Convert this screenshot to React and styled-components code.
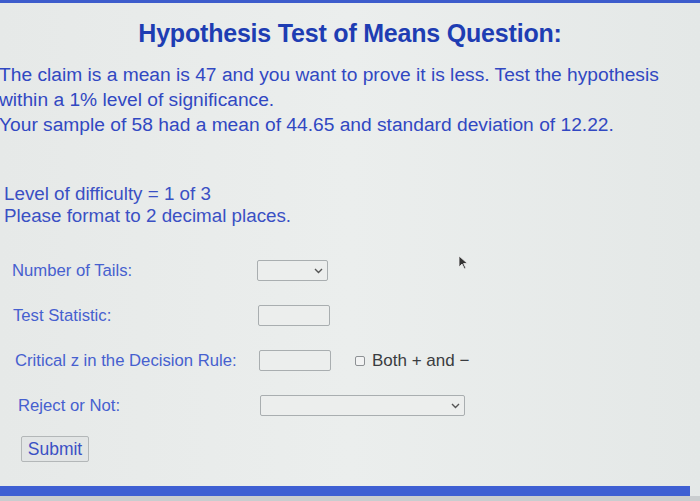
import React from 'react';
import styled, { createGlobalStyle } from 'styled-components';

const Global = createGlobalStyle`
    html, body {
        margin: 0;
        padding: 0;
        background: #e8ebea;
    }
    * { box-sizing: border-box; }
`;

const Page = styled.div`
    width: 700px;
    height: 501px;
    overflow: hidden;
    position: relative;
    background: linear-gradient(90deg, #e6e9e8 0%, #ebeeed 50%, #e4e8e7 100%);
    font-family: "Liberation Sans", Arial, sans-serif;
    display: flex;
    flex-direction: column;
`;

const TopBar = styled.div`
    height: 3px;
    background: #3d5ccc;
`;

const Title = styled.h1`
    margin: 15px 0 0 0;
    text-align: center;
    font-size: 25px;
    line-height: 30px;
    font-weight: bold;
    color: #1e3db3;
    letter-spacing: -0.2px;
`;

const Question = styled.p`
    margin: 14px 0 0 -1px;
    font-size: 19.2px;
    line-height: 25px;
    color: #3148c2;
    white-space: nowrap;
`;

const Notes = styled.p`
    margin: 46px 0 0 4px;
    font-size: 18.8px;
    line-height: 22px;
    color: #3a50c4;
`;

const Form = styled.div`
    margin: 21px 0 0 12px;
    display: grid;
    grid-template-columns: 245px auto 1fr;
    grid-auto-rows: 45px;
    align-items: center;
`;

const Label = styled.div`
    font-size: 16.7px;
    color: #4660cf;
    padding-left: ${p => p.indent || 0}px;
`;

const Field = styled.div`
    display: flex;
    align-items: center;
`;

const Box = styled.div`
    width: ${p => p.w}px;
    height: 21px;
    margin-left: ${p => p.shift || 0}px;
    border: 1px solid #a9aeb0;
    border-radius: 2px;
    background: #eceeed;
    display: flex;
    align-items: center;
    justify-content: flex-end;
    padding-right: 4px;
`;

const Check = styled.label`
    display: flex;
    align-items: center;
    margin-left: 24px;
    font-size: 17px;
    color: #3a3c40;
    gap: 7px;
`;

const CheckBox = styled.span`
    width: 10px;
    height: 10px;
    border: 1px solid #8d9194;
    border-radius: 2px;
    background: #f2f3f3;
`;

const Submit = styled.button`
    margin: 8px 0 0 21px;
    width: 68px;
    height: 26px;
    border: 1px solid #b3b7b8;
    border-radius: 2px;
    background: #e2e5e5;
    font-family: "Liberation Sans", Arial, sans-serif;
    font-size: 17.5px;
    color: #3a50c4;
    padding: 0;
`;

const BottomBar = styled.div`
    position: absolute;
    left: 0;
    right: 10px;
    top: 486px;
    height: 10px;
    background: #3e5fd3;
`;

const Bezel = styled.div`
    position: absolute;
    left: 0;
    right: 0;
    top: 496px;
    bottom: 0;
    background: #c9cdcf;
`;

const Chevron = () => (
    <svg width="9" height="6" viewBox="0 0 9 6">
        <path d="M1 1 L4.5 4.5 L8 1" fill="none" stroke="#555" strokeWidth="1.4" />
    </svg>
);

const Cursor = styled.svg`
    position: absolute;
    left: 458px;
    top: 255px;
`;

const App = () => {
    return (
        <Page>
            <Global />
            <TopBar />
            <Title>Hypothesis Test of Means Question:</Title>
            <Question>
                The claim is a mean is 47 and you want to prove it is less. Test the hypothesis
                <br />
                within a 1% level of significance.
                <br />
                Your sample of 58 had a mean of 44.65 and standard deviation of 12.22.
            </Question>
            <Notes>
                Level of difficulty = 1 of 3
                <br />
                Please format to 2 decimal places.
            </Notes>
            <Form>
                <Label>Number of Tails:</Label>
                <Field><Box w={71}><Chevron /></Box></Field>
                <div />

                <Label indent={1}>Test Statistic:</Label>
                <Field><Box w={72} shift={1} /></Field>
                <div />

                <Label indent={3}>Critical z in the Decision Rule:</Label>
                <Field>
                    <Box w={72} shift={2} />
                    <Check><CheckBox />Both + and −</Check>
                </Field>
                <div />

                <Label indent={6}>Reject or Not:</Label>
                <Field><Box w={205} shift={3}><Chevron /></Box></Field>
                <div />
            </Form>
            <Submit>Submit</Submit>
            <Cursor width="12" height="16" viewBox="0 0 12 16">
                <path d="M1 1 L1 12 L4 9 L6.5 14 L8 13.3 L5.6 8.5 L9.5 8.5 Z" fill="#333" stroke="#eee" strokeWidth="0.8" />
            </Cursor>
            <BottomBar />
            <Bezel />
        </Page>
    );
};

export default App;
